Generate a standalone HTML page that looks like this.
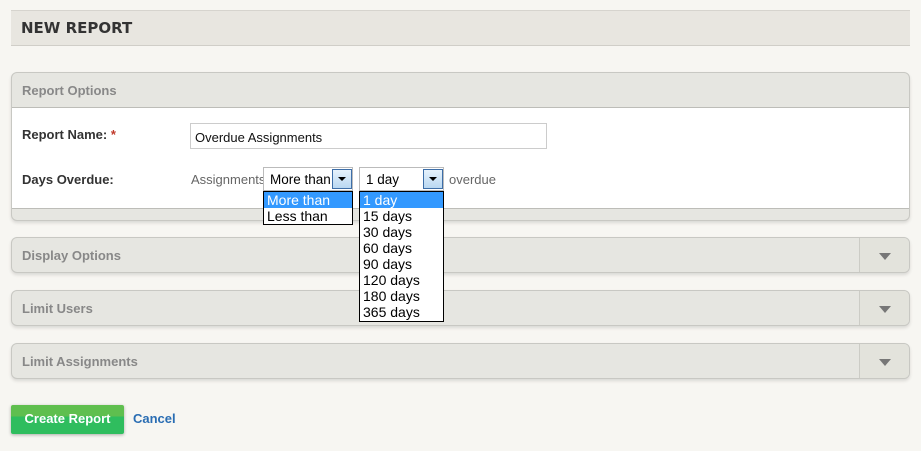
<!DOCTYPE html>
<html><head><style>
*{box-sizing:border-box;margin:0;padding:0}
body{width:921px;height:451px;background:#f7f6f2;font-family:"Liberation Sans",sans-serif;position:relative;overflow:hidden}
.abs{position:absolute}
.hdr{left:11px;top:10px;width:899px;height:36px;background:#e8e6e0;border-top:1px solid #d6d4ce;border-bottom:1px solid #d0cec8}
.hdr span{position:absolute;left:10px;top:8px;font-weight:bold;font-size:15px;color:#333;font-family:"DejaVu Sans",sans-serif}
.panel{left:11px;width:899px;border:1px solid #c8c8c3;border-radius:6px;background:#e6e6e1;box-shadow:0 2px 3px rgba(0,0,0,.12);overflow:hidden}
.ptitle{position:absolute;left:10px;font-weight:bold;font-size:13px;color:#888}
.arrow{position:absolute;right:0;top:0;width:50px;height:100%;border-left:1px solid #ccccc6;background:#e3e3dc}
.arrow:after{content:"";position:absolute;left:19px;top:15px;border-left:6px solid transparent;border-right:6px solid transparent;border-top:7px solid #777}
.lbl{font-weight:bold;font-size:13px;color:#333}
.sel{background:#fff;border:1px solid #bbb;font-size:13.5px;color:#000}
.btn{width:20px;height:20px;top:1px;border:1px solid #3d6ea8;background:linear-gradient(#e6f2fc,#b9d8f2)}
.btn:after{content:"";position:absolute;left:5px;top:7px;border-left:4px solid transparent;border-right:4px solid transparent;border-top:4px solid #000}
.list{background:#fff;border:1px solid #000;font-size:14px}
.list div{height:16px;line-height:17px;padding-left:3px}
.list .hl{background:#3399ff;color:#fff}
</style></head><body>
<div class="abs hdr"><span>NEW REPORT</span></div>

<div class="abs panel" style="top:72px;height:149px">
 <div class="ptitle" style="top:10px">Report Options</div>
 <div class="abs" style="left:0;top:34px;width:897px;height:102px;background:#fff;border-top:1px solid #bdbdb8;border-bottom:1px solid #bdbdb8"></div>
</div>
<div class="abs lbl" style="left:22px;top:127px">Report Name: <span style="color:#c0392b">*</span></div>
<div class="abs" style="left:190px;top:123px;width:357px;height:26px;border:1px solid #ccc;background:#fff;font-size:13px;padding:6px 0 0 4px;color:#111">Overdue Assignments</div>
<div class="abs lbl" style="left:22px;top:172px">Days Overdue:</div>
<div class="abs" style="left:191px;top:172px;font-size:13px;color:#666">Assignments</div>
<div class="abs sel" style="left:263px;top:167px;width:90px;height:24px;padding:4px 0 0 6px">More than<div class="abs btn" style="left:68px"></div></div>
<div class="abs sel" style="left:359px;top:167px;width:85px;height:24px;padding:4px 0 0 6px">1 day<div class="abs btn" style="left:63px"></div></div>
<div class="abs" style="left:449px;top:172px;font-size:13px;color:#666">overdue</div>

<div class="abs panel" style="top:237px;height:36px"><div class="ptitle" style="top:10px">Display Options</div><div class="arrow"></div></div>
<div class="abs panel" style="top:290px;height:36px"><div class="ptitle" style="top:10px">Limit Users</div><div class="arrow"></div></div>
<div class="abs panel" style="top:343px;height:36px"><div class="ptitle" style="top:10px">Limit Assignments</div><div class="arrow"></div></div>

<div class="abs list" style="left:263px;top:191px;width:90px;height:34px"><div class="hl">More than</div><div>Less than</div></div>
<div class="abs list" style="left:359px;top:191px;width:85px;height:131px"><div class="hl">1 day</div><div>15 days</div><div>30 days</div><div>60 days</div><div>90 days</div><div>120 days</div><div>180 days</div><div>365 days</div></div>

<div class="abs" style="left:11px;top:405px;width:113px;height:29px;border-radius:2px;background:linear-gradient(#5fbf4f 0,#5fbf4f 40%,#2fbd5e 40%,#2fbd5e 100%);box-shadow:0 1px 3px rgba(0,0,0,.3);color:#fff;font-weight:bold;font-size:13px;text-align:center;line-height:28px">Create Report</div>
<div class="abs" style="left:133px;top:411px;font-weight:bold;font-size:13px;color:#2a6db3">Cancel</div>
</body></html>
